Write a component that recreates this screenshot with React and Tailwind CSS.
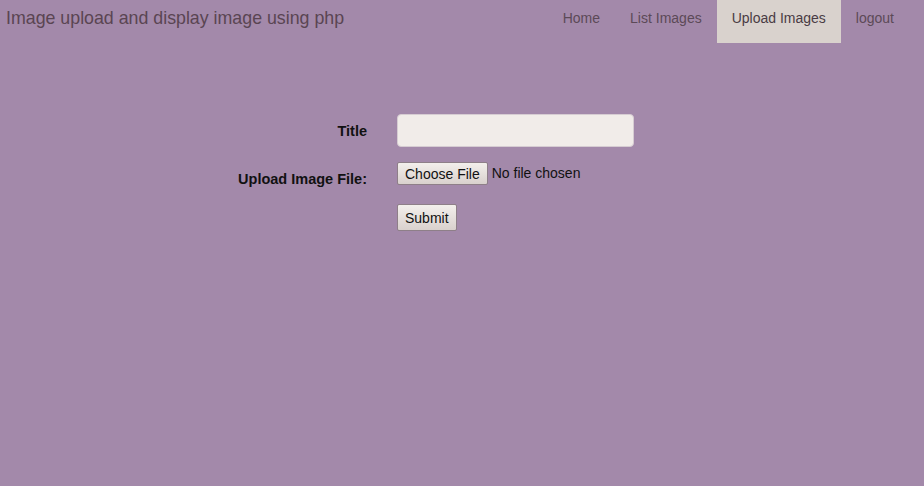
export default function App() {
  const font = { fontFamily: '"Liberation Sans", Arial, sans-serif' };
  return (
    <div className="min-h-[486px] w-full bg-[#a389aa]" style={font}>
      <nav className="flex h-[43px] items-start justify-between pl-[6px] pr-[15px]">
        <div className="pt-[7px] text-[17.8px] leading-[22px] text-[#5a4552]">
          Image upload and display image using php
        </div>
        <ul className="flex">
          <li className="h-[43px] px-[15px] pt-[8px] text-[14px] leading-[20px] text-[#5c4a57]">Home</li>
          <li className="h-[43px] px-[15px] pt-[8px] text-[14px] leading-[20px] text-[#5c4a57]">List Images</li>
          <li className="h-[43px] bg-[#d9d2cd] px-[15px] pt-[8px] text-[14px] leading-[20px] text-[#4a3c44]">Upload Images</li>
          <li className="h-[43px] px-[15px] pt-[8px] text-[14px] leading-[20px] text-[#5c4a57]">logout</li>
        </ul>
      </nav>
      <form className="grid grid-cols-[367px_auto] gap-x-[30px] pt-[71px]">
        <label className="flex h-[33px] items-center justify-end pt-[2px] text-[14.5px] font-bold text-[#111]">Title</label>
        <div>
          <input
            type="text"
            className="block h-[33px] w-[237px] rounded-[4px] border border-[#d6ccd2] bg-[#f1ece9] px-2 text-[14px] outline-none"
          />
        </div>
        <label className="mt-[15px] flex h-[33px] items-center justify-end pt-[2px] text-[14.5px] font-bold text-[#111]">Upload Image File:</label>
        <div className="mt-[15px] flex h-[23px] items-center">
          <button
            type="button"
            className="h-[23px] rounded-[2px] border border-[#8e7f88] bg-gradient-to-b from-[#f3efec] to-[#d9d1cd] px-[7px] text-[14px] leading-[20px] text-[#111]"
          >
            Choose File
          </button>
          <span className="ml-[4px] text-[14px] text-[#111]">No file chosen</span>
        </div>
        <div className="col-start-2 mt-[9px]">
          <button
            type="button"
            className="h-[27px] rounded-[2px] border border-[#8e7f88] bg-gradient-to-b from-[#f3efec] to-[#d9d1cd] px-[7px] text-[14px] leading-[20px] text-[#111]"
          >
            Submit
          </button>
        </div>
      </form>
    </div>
  );
}
